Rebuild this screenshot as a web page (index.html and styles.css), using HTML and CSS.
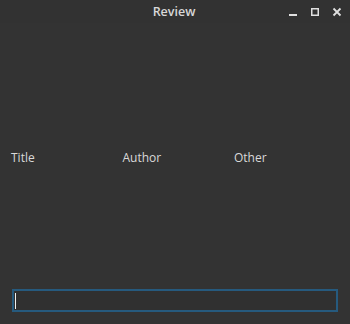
FILE: index.html
```html
<!DOCTYPE html>
<html>
<head>
    <title>Review</title>
    <link rel="stylesheet" href="styles.css">
</head>
<body>
    <div class="window">
        <div class="titlebar">
            <span class="title">Review</span>
            <div class="controls">
                <svg width="10" height="10" viewBox="0 0 10 10"><rect x="1" y="7" width="8" height="2" fill="#e0e0e0"/></svg>
                <svg width="10" height="10" viewBox="0 0 10 10"><rect x="1.75" y="1.75" width="6.5" height="6.5" fill="none" stroke="#e0e0e0" stroke-width="1.5"/></svg>
                <svg width="10" height="10" viewBox="0 0 10 10"><path d="M1.5 1.5 L8.5 8.5 M8.5 1.5 L1.5 8.5" stroke="#e0e0e0" stroke-width="1.8"/></svg>
            </div>
        </div>
        <div class="content">
            <div class="columns">
                <span class="col">Title</span>
                <span class="col">Author</span>
                <span class="col">Other</span>
            </div>
        </div>
        <div class="entry-row">
            <div class="entry"><span class="caret"></span></div>
        </div>
    </div>
</body>
</html>
```

FILE: styles.css
```css
body { margin: 0; background-color: #333333; font-family: "Open Sans", "DejaVu Sans", sans-serif; color: #dcdcdc; }
.window { width: 350px; height: 324px; display: flex; flex-direction: column; background: #333333; }
.titlebar {
    height: 23px;
    display: flex;
    align-items: center;
    justify-content: center;
    position: relative;
    background: #323232;
}
.title { font-size: 12.5px; font-weight: 600; color: #d8d8d8; margin-left: -2px; }
.controls {
    position: absolute;
    right: 8px;
    top: 7px;
    display: flex;
    gap: 12px;
}
.controls svg { display: block; }
.content { flex: 1; display: flex; align-items: center; padding-top: 2px; }
.columns { display: flex; padding-left: 11px; width: 100%; }
.col { width: 111.5px; font-size: 12px; color: #d9d9d9; }
.entry-row { padding: 0 12px 12px 12px; }
.entry {
    height: 19px;
    border: 2px solid #265a7e;
    background: #303030;
    display: flex;
    align-items: center;
    padding-left: 1px;
}
.caret { width: 1px; height: 16px; background: #f0f0f0; }
```
